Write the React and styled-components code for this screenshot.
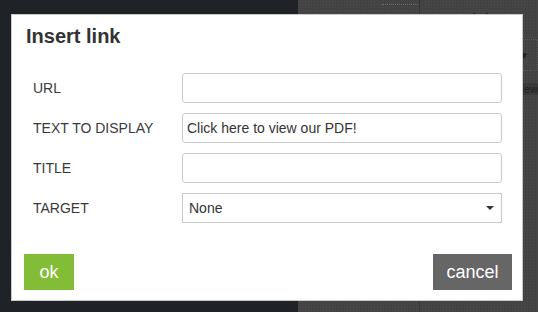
import React from 'react';
import styled, { createGlobalStyle } from 'styled-components';

const GlobalStyle = createGlobalStyle`
  html, body {
    margin: 0;
    padding: 0;
    width: 538px;
    height: 312px;
    overflow: hidden;
    font-family: "Liberation Sans", Arial, sans-serif;
  }
`;

const Page = styled.div`
  position: relative;
  display: flex;
  width: 538px;
  height: 312px;
`;

const DarkPane = styled.div`
  width: 307px;
  background: #1f2227;
`;

const Workspace = styled.div`
  flex: 1;
  display: flex;
  background-color: #434343;
  background-image: radial-gradient(#4c4c4c 0.6px, transparent 0.8px);
  background-size: 3px 3px;
`;

const Canvas = styled.div`
  width: 121px;
  padding: 4px 0 0 84px;
  box-sizing: border-box;
`;

const DottedRule = styled.div`
  width: 36px;
  border-top: 1px dotted #6a6a6a;
`;

const Sidebar = styled.div`
  flex: 1;
  display: flex;
  flex-direction: column;
  border-left: 1px solid #383838;
  padding: 11px 0 0 12px;
  gap: 12px;
`;

const SideTitle = styled.div`
  font-size: 14px;
  font-weight: bold;
  color: #222;
`;

const SideSelect = styled.div`
  align-self: flex-end;
  width: 96px;
  height: 30px;
  border: 1px dotted #5a5a5a;
  display: flex;
  align-items: center;
  justify-content: flex-end;
  padding-right: 8px;
  color: #222;
  font-size: 10px;
`;

const SideBar = styled.div`
  height: 12px;
  background: #3a3a3a;
  color: #222;
  font-size: 11px;
  text-align: right;
  line-height: 12px;
`;

const Dialog = styled.div`
  position: absolute;
  left: 11px;
  top: 14px;
  width: 512px;
  height: 287px;
  box-sizing: border-box;
  background: #fff;
  border: 1px solid #c9c9c9;
  display: flex;
  flex-direction: column;
`;

const Title = styled.h1`
  margin: 0;
  padding: 9px 0 0 14px;
  font-size: 20px;
  line-height: 24px;
  font-weight: bold;
  color: #333;
`;

const Form = styled.div`
  margin-top: 25px;
  padding-left: 21px;
  display: grid;
  grid-template-columns: 149px 320px;
  row-gap: 10px;
  align-items: center;
`;

const Label = styled.label`
  font-size: 14px;
  color: #3a3a3a;
`;

const TextInput = styled.input`
  box-sizing: border-box;
  width: 320px;
  height: 30px;
  border: 1px solid #c8c8c8;
  border-radius: 3px;
  padding: 0 4px;
  font-family: "Liberation Sans", Arial, sans-serif;
  font-size: 14px;
  color: #333;
  outline: none;
`;

const SelectWrap = styled.div`
  position: relative;
  width: 320px;
  height: 30px;
`;

const Select = styled.select`
  appearance: none;
  box-sizing: border-box;
  width: 100%;
  height: 100%;
  border: 1px solid #c8c8c8;
  border-radius: 0;
  background: #fff;
  padding: 0 6px;
  font-family: "Liberation Sans", Arial, sans-serif;
  font-size: 14px;
  color: #333;
  outline: none;
`;

const Caret = styled.span`
  position: absolute;
  right: 8px;
  top: 13px;
  width: 0;
  height: 0;
  border-left: 4px solid transparent;
  border-right: 4px solid transparent;
  border-top: 4px solid #333;
  pointer-events: none;
`;

const Footer = styled.div`
  margin-top: auto;
  display: flex;
  justify-content: space-between;
  padding: 0 10px 10px 12px;
`;

const Button = styled.button`
  height: 36px;
  min-width: ${(p) => p.$w}px;
  padding: 0;
  border: none;
  border-radius: 0;
  background: ${(p) => p.$bg};
  color: #fff;
  font-family: "Liberation Sans", Arial, sans-serif;
  font-size: 18px;
  cursor: pointer;
`;

export default function App() {
  return (
    <Page>
      <GlobalStyle />
      <DarkPane />
      <Workspace>
        <Canvas>
          <DottedRule />
        </Canvas>
        <Sidebar>
          <SideTitle>Text Link</SideTitle>
          <SideSelect>▼</SideSelect>
          <SideBar>Preview</SideBar>
        </Sidebar>
      </Workspace>

      <Dialog>
        <Title>Insert link</Title>
        <Form>
          <Label>URL</Label>
          <TextInput defaultValue="" />
          <Label>TEXT TO DISPLAY</Label>
          <TextInput defaultValue="Click here to view our PDF!" />
          <Label>TITLE</Label>
          <TextInput defaultValue="" />
          <Label>TARGET</Label>
          <SelectWrap>
            <Select defaultValue="none">
              <option value="none">None</option>
              <option value="_blank">New window</option>
            </Select>
            <Caret />
          </SelectWrap>
        </Form>
        <Footer>
          <Button $bg="#83bd38" $w={50}>ok</Button>
          <Button $bg="#666666" $w={79}>cancel</Button>
        </Footer>
      </Dialog>
    </Page>
  );
}
